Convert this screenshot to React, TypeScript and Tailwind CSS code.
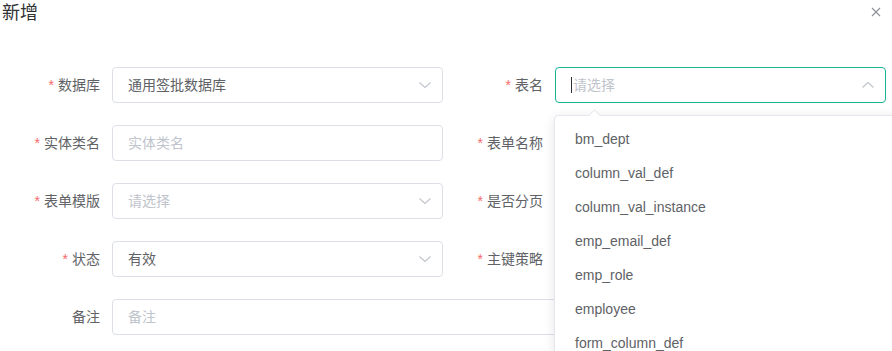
import React from "react";

const FONT = { fontFamily: '"Liberation Sans", "Noto Sans CJK SC", sans-serif' };

const TABLES = [
  "bm_dept",
  "column_val_def",
  "column_val_instance",
  "emp_email_def",
  "emp_role",
  "employee",
  "form_column_def",
  "form_def",
];

function Chevron({ up = false }: { up?: boolean }) {
  return (
    <svg width="14" height="14" viewBox="0 0 14 14" className="text-[#c0c4cc]">
      <path
        d={up ? "M1.5 9.5 L7 4.5 L12.5 9.5" : "M1.5 4.5 L7 9.5 L12.5 4.5"}
        fill="none"
        stroke="currentColor"
        strokeWidth="1.1"
      />
    </svg>
  );
}

interface FieldProps {
  label: string;
  required?: boolean;
  value?: string;
  placeholder?: string;
  select?: boolean;
  focused?: boolean;
  className?: string;
}

function Field({ label, required, value, placeholder, select, focused, className }: FieldProps) {
  return (
    <div className={"flex h-9 " + (className ?? "")}>
      <label className="w-[112px] shrink-0 pr-3 text-right text-sm leading-9 text-[#606266]">
        {required ? <span className="mr-1 text-[#f56c6c]">*</span> : null}
        {label}
      </label>
      <div
        className={
          "relative flex h-9 flex-1 items-center rounded border bg-white pl-[15px] pr-8 text-sm " +
          (focused ? "border-[#1ab394]" : "border-[#dcdfe6]")
        }
      >
        {focused ? <span className="mr-px h-4 w-px bg-[#303133]" /> : null}
        {value ? (
          <span className="text-[#606266]">{value}</span>
        ) : (
          <span className="text-[#c0c4cc]">{placeholder}</span>
        )}
        {select ? (
          <span className="absolute right-[10px] top-1/2 -translate-y-1/2">
            <Chevron up={focused} />
          </span>
        ) : null}
      </div>
    </div>
  );
}

export default function App() {
  return (
    <div className="relative h-[351px] w-[892px] overflow-hidden bg-white" style={FONT}>
      <div className="flex h-[30px] items-start justify-between pl-[2px] pr-[11px] pt-[1px]">
        <span className="text-lg leading-6 text-[#303133]">新增</span>
        <svg width="10" height="10" viewBox="0 0 10 10" className="mt-[6px] text-[#909399]">
          <path d="M1 1 L9 9 M9 1 L1 9" stroke="currentColor" strokeWidth="1.2" />
        </svg>
      </div>

      <div className="grid w-[886px] grid-cols-[443px_443px] gap-y-[22px] pt-[37px]">
        <Field label="数据库" required value="通用签批数据库" select />
        <Field label="表名" required placeholder="请选择" select focused />
        <Field label="实体类名" required placeholder="实体类名" />
        <Field label="表单名称" required placeholder="表单名称" />
        <Field label="表单模版" required placeholder="请选择" select />
        <Field label="是否分页" required placeholder="请选择" select />
        <Field label="状态" required value="有效" select />
        <Field label="主键策略" required placeholder="请选择" select />
        <Field label="备注" placeholder="备注" className="col-span-2" />
      </div>

      <div className="absolute left-[554px] top-[115px] w-[360px] rounded border border-[#e4e7ed] bg-white shadow-[0_2px_12px_0_rgba(0,0,0,0.1)]">
        <div className="absolute -top-[5px] left-[35px] h-[9px] w-[9px] rotate-45 border-l border-t border-[#e4e7ed] bg-white" />
        <ul className="py-[6px]">
          {TABLES.map((t) => (
            <li key={t} className="h-[34px] px-5 text-sm leading-[34px] text-[#606266]">
              {t}
            </li>
          ))}
        </ul>
      </div>
    </div>
  );
}
